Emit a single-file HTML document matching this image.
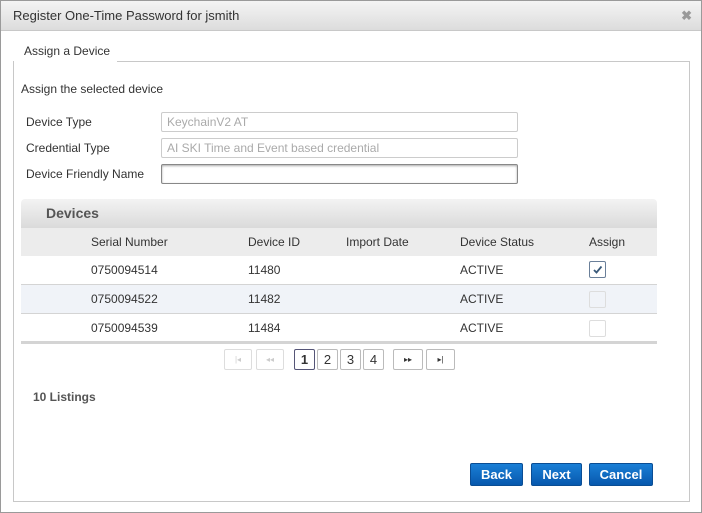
<!DOCTYPE html>
<html><head><style>
*{margin:0;padding:0;box-sizing:border-box}
body{width:702px;height:513px;position:relative;font-family:"Liberation Sans",Arial,sans-serif;font-size:12px;color:#333;background:#fff;overflow:hidden}
.a{position:absolute}
#outer{left:0;top:0;width:702px;height:513px;border:1px solid #9a9a9a}
#title{left:1px;top:1px;width:700px;height:30px;background:linear-gradient(#f4f4f4,#dcdcdc);border-bottom:1px solid #c8c8c8;font-size:13px;line-height:30px;padding-left:12px;color:#333}
#x{right:10px;top:8px;font-size:13px;color:#999;font-weight:bold}
#panel{left:13px;top:61px;width:677px;height:441px;border:1px solid #c8c8c8}
#tab{left:14px;top:40px;width:103px;height:22px;background:#fff;padding-left:10px;line-height:22px;font-size:12px}
.lbl{left:26px;font-size:12px}
.inp{left:161px;width:357px;height:20px;border:1px solid #ccc;border-radius:2px;color:#aaa;padding-left:5px;line-height:18px}
#dh{left:21px;top:199px;width:636px;height:29px;background:linear-gradient(#f3f3f3,#dadada);border-radius:4px 4px 0 0;font-weight:bold;font-size:14px;color:#555;padding-left:25px;line-height:29px}
#ch{left:21px;top:228px;width:636px;height:28px;background:#ececec}
.row{left:21px;width:636px;height:29px;border-bottom:1px solid #d4d4d4}
.c{position:absolute;line-height:28px}
.cb{position:absolute;left:568px;top:6px;width:17px;height:17px;border:1px solid #ddd;border-radius:2px;background:#fff}
.pb{top:349px;height:21px;border:1px solid #bbb;border-radius:2px;background:#fff;text-align:center;line-height:19px;font-size:13px}
.btn{top:463px;height:23px;background:linear-gradient(#1a7fd6,#0758ad);border:1px solid #0a4d94;color:#fff;font-weight:bold;font-size:13px;text-align:center;line-height:21px;border-radius:2px}
</style></head><body>
<div class="a" id="outer"></div>
<div class="a" id="title">Register One-Time Password for jsmith</div>
<div class="a" id="x">✖</div>
<div class="a" id="panel"></div>
<div class="a" id="tab">Assign a Device</div>
<div class="a" style="left:21px;top:82px">Assign the selected device</div>
<div class="a lbl" style="top:115px">Device Type</div>
<div class="a lbl" style="top:141px">Credential Type</div>
<div class="a lbl" style="top:167px">Device Friendly Name</div>
<div class="a inp" style="top:112px">KeychainV2 AT</div>
<div class="a inp" style="top:138px">AI SKI Time and Event based credential</div>
<div class="a inp" style="top:164px;border-color:#888;box-shadow:inset 0 1px 2px #aaa"></div>
<div class="a" id="dh">Devices</div>
<div class="a" id="ch">
<span class="c" style="left:70px">Serial Number</span><span class="c" style="left:227px">Device ID</span><span class="c" style="left:325px">Import Date</span><span class="c" style="left:439px">Device Status</span><span class="c" style="left:568px">Assign</span></div>
<div class="a row" style="top:256px"><span class="c" style="left:70px">0750094514</span><span class="c" style="left:227px">11480</span><span class="c" style="left:439px">ACTIVE</span><div class="cb" style="border-color:#6a7f99;top:5px"><svg width="15" height="15" style="position:absolute;left:0;top:0"><path d="M4 8l2.5 2.5 5-6" stroke="#3a5a7a" stroke-width="1.8" fill="none"/></svg></div></div>
<div class="a row" style="top:285px;background:#f0f3f8"><span class="c" style="left:70px">0750094522</span><span class="c" style="left:227px">11482</span><span class="c" style="left:439px">ACTIVE</span><div class="cb" style="background:#f0f3f8"></div></div>
<div class="a row" style="top:314px;border-bottom:3px solid #d4d4d4;height:30px"><span class="c" style="left:70px">0750094539</span><span class="c" style="left:227px">11484</span><span class="c" style="left:439px">ACTIVE</span><div class="cb"></div></div>
<div class="a pb" style="left:224px;width:28px;color:#ccc;border-color:#ddd;font-size:8px">|◂</div>
<div class="a pb" style="left:256px;width:28px;color:#ccc;border-color:#ddd;font-size:8px">◂◂</div>
<div class="a pb" style="left:294px;width:21px;border-color:#557;font-weight:bold">1</div>
<div class="a pb" style="left:317px;width:21px">2</div>
<div class="a pb" style="left:340px;width:21px">3</div>
<div class="a pb" style="left:363px;width:21px">4</div>
<div class="a pb" style="left:393px;width:30px;font-size:8px">▸▸</div>
<div class="a pb" style="left:426px;width:29px;font-size:8px">▸|</div>
<div class="a" style="left:33px;top:390px;font-weight:bold;color:#555">10 Listings</div>
<div class="a btn" style="left:470px;width:53px">Back</div>
<div class="a btn" style="left:531px;width:51px">Next</div>
<div class="a btn" style="left:589px;width:64px">Cancel</div>
</body></html>
